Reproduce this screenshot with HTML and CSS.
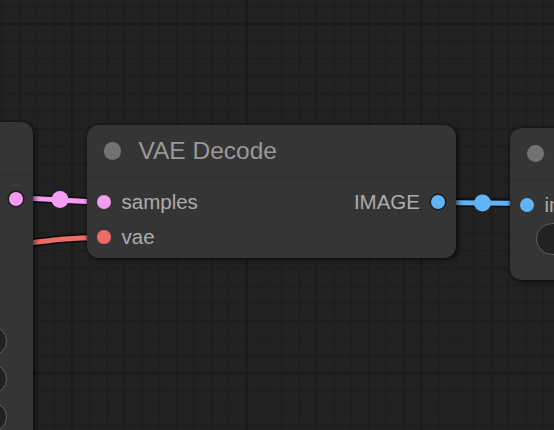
FILE: index.html
```html
<!DOCTYPE html>
<html>
<head>
<meta charset="utf-8">
<link rel="stylesheet" href="styles.css">
</head>
<body>
<div class="canvas">
  <svg class="backdrop" width="554" height="430" viewBox="0 0 554 430">
    <defs>
      <pattern id="minor" width="17.46" height="17.46" x="1.41" y="5.79" patternUnits="userSpaceOnUse">
        <rect x="0" y="0" width="17.46" height="1.5" fill="#1d1d1d"/>
        <rect x="0" y="0" width="1.5" height="17.46" fill="#1d1d1d"/>
      </pattern>
      <pattern id="major" width="174.6" height="174.6" x="70.75" y="22.75" patternUnits="userSpaceOnUse">
        <rect x="0" y="0" width="174.6" height="2.5" fill="#1a1a1a"/>
        <rect x="0" y="0" width="2.5" height="174.6" fill="#1a1a1a"/>
      </pattern>
    </defs>
    <rect width="554" height="430" fill="#222222"/>
    <rect width="554" height="430" fill="url(#minor)"/>
    <rect width="554" height="430" fill="url(#major)"/>

    <g fill="none" stroke-linecap="round">
      <path d="M16 198 C38 198, 82 202, 104 202" stroke="rgba(0,0,0,0.55)" stroke-width="8.5"/>
      <path d="M16 198 C38 198, 82 202, 104 202" stroke="#f59cf3" stroke-width="5"/>
      <path d="M-40 252 C30 244, 60 237, 104 237.5" stroke="rgba(0,0,0,0.55)" stroke-width="8.5"/>
      <path d="M-40 252 C30 244, 60 237, 104 237.5" stroke="#f06c6a" stroke-width="5"/>
      <path d="M438 202.5 C460 202.5, 505 203.5, 527 203.5" stroke="rgba(0,0,0,0.55)" stroke-width="8.5"/>
      <path d="M438 202.5 C460 202.5, 505 203.5, 527 203.5" stroke="#62b3f4" stroke-width="5"/>
    </g>
    <circle cx="60" cy="199.5" r="8.5" fill="#f59cf3"/>
    <circle cx="482.5" cy="203" r="8.5" fill="#62b3f4"/>
  </svg>

  <div class="node node-left">
    <div class="title"></div>
    <div class="body">
      <div class="slot out"><span class="dot latent ring"></span></div>
      <div class="widgets">
        <div class="pill"></div>
        <div class="pill"></div>
        <div class="pill"></div>
      </div>
    </div>
  </div>

  <div class="node node-mid">
    <div class="title"><span class="tdot"></span><span class="tname">VAE Decode</span></div>
    <div class="body cols">
      <div class="col">
        <div class="slot in"><span class="dot latent"></span><span class="label">samples</span></div>
        <div class="slot in"><span class="dot vae"></span><span class="label">vae</span></div>
      </div>
      <div class="col">
        <div class="slot out"><span class="label">IMAGE</span><span class="dot image ring"></span></div>
      </div>
    </div>
  </div>

  <div class="node node-right">
    <div class="title"><span class="tdot"></span></div>
    <div class="body">
      <div class="slot in"><span class="dot image"></span><span class="label">images</span></div>
      <div class="pill pill-right"></div>
    </div>
  </div>
</div>
</body>
</html>
```

FILE: styles.css
```css
* { box-sizing: border-box; }
html, body { margin: 0; padding: 0; background: #222222; }
body { font-family: "Liberation Sans", Arial, sans-serif; }

.canvas {
  position: relative;
  width: 554px;
  height: 430px;
  overflow: hidden;
  background: #222222;
}

.backdrop {
  position: absolute;
  left: 0;
  top: 0;
  display: block;
}

.node {
  position: absolute;
  background: #353535;
  border-radius: 12px;
  box-shadow: 2px 2px 6px rgba(0, 0, 0, 0.6), 0 0 3px rgba(0, 0, 0, 0.45);
  display: flex;
  flex-direction: column;
  overflow: hidden;
}

.title {
  height: 52.5px;
  flex: none;
  display: flex;
  align-items: center;
  padding-left: 16.5px;
  border-bottom: 1px solid #2d2d2d;
  white-space: nowrap;
}

.tdot {
  width: 17.5px;
  height: 17.5px;
  border-radius: 50%;
  background: #727272;
  flex: none;
}

.tname {
  margin-left: 17.5px;
  font-size: 24.5px;
  color: #999999;
  line-height: 1;
  padding-top: 1px;
}

.body {
  padding-top: 7px;
  display: flex;
  flex-direction: column;
}

.cols {
  flex-direction: row;
  justify-content: space-between;
}

.col {
  display: flex;
  flex-direction: column;
}

.slot {
  height: 35px;
  display: flex;
  align-items: center;
  white-space: nowrap;
}

.slot.in { padding-left: 10px; }
.slot.out { justify-content: flex-end; padding-right: 11px; }

.dot {
  width: 14px;
  height: 14px;
  border-radius: 50%;
  flex: none;
}

.dot.ring { box-shadow: 0 0 0 1.5px #1c1c1c; }

.latent { background: #f59cf3; }
.vae { background: #f06c6a; }
.image { background: #62b3f4; }

.label {
  font-size: 20.5px;
  color: #acacac;
  line-height: 1;
  padding-top: 1px;
}

.slot.in .label { margin-left: 10.5px; }
.slot.out .label { margin-right: 11px; }

/* left, partially visible node */
.node-left {
  left: -200px;
  top: 122px;
  width: 233px;
  height: 400px;
}
.node-left .slot.out { padding-right: 10px; }

.widgets {
  margin-top: 109.5px;
  display: flex;
  flex-direction: column;
  gap: 8px;
  padding: 0 26.5px 0 26px;
}

.pill {
  height: 30px;
  border-radius: 15px;
  background: #222222;
  border: 1.5px solid #5e5e5e;
}

/* middle node */
.node-mid {
  left: 87px;
  top: 125px;
  width: 369px;
  height: 133px;
}

/* right node */
.node-right {
  left: 510px;
  top: 127.5px;
  width: 300px;
  height: 152.5px;
}

.pill-right {
  margin: 1px 26px 0 26px;
  height: 32px;
  border-radius: 16px;
}
```
